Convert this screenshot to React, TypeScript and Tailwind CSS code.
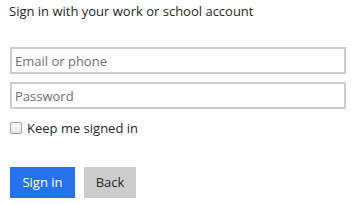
import React from 'react';

export default function App() {
  return (
    <div className="w-[360px] h-[204px] bg-white text-[#262626] font-['Open_Sans',sans-serif]">
      <div className="px-[10px] pt-[3px]">
        <p className="text-[13px] leading-[16px] -ml-[1px]">Sign in with your work or school account</p>

        <div className="mt-[28px] flex flex-col gap-[8px] w-[336px]">
          <input
            type="text"
            placeholder="Email or phone"
            className="h-[27px] border-2 border-[#cccccc] px-[3px] text-[13px] placeholder:text-[#707070] outline-none"
          />
          <input
            type="password"
            placeholder="Password"
            className="h-[27px] border-2 border-[#cccccc] px-[3px] text-[13px] placeholder:text-[#707070] outline-none"
          />
        </div>

        <label className="mt-[11px] flex items-center gap-[5px] text-[13px] leading-[16px]">
          <span className="w-[12px] h-[12px] border border-[#a0a0a0] rounded-[2px] bg-gradient-to-b from-[#fcfcfc] to-[#e8e8e8]" />
          Keep me signed in
        </label>

        <div className="mt-[31px] flex gap-[9px]">
          <button className="h-[31px] w-[65px] bg-[#2672ec] text-white text-[13px]">Sign in</button>
          <button className="h-[31px] w-[52px] bg-[#cccccc] text-[#262626] text-[13px]">Back</button>
        </div>
      </div>
    </div>
  );
}
